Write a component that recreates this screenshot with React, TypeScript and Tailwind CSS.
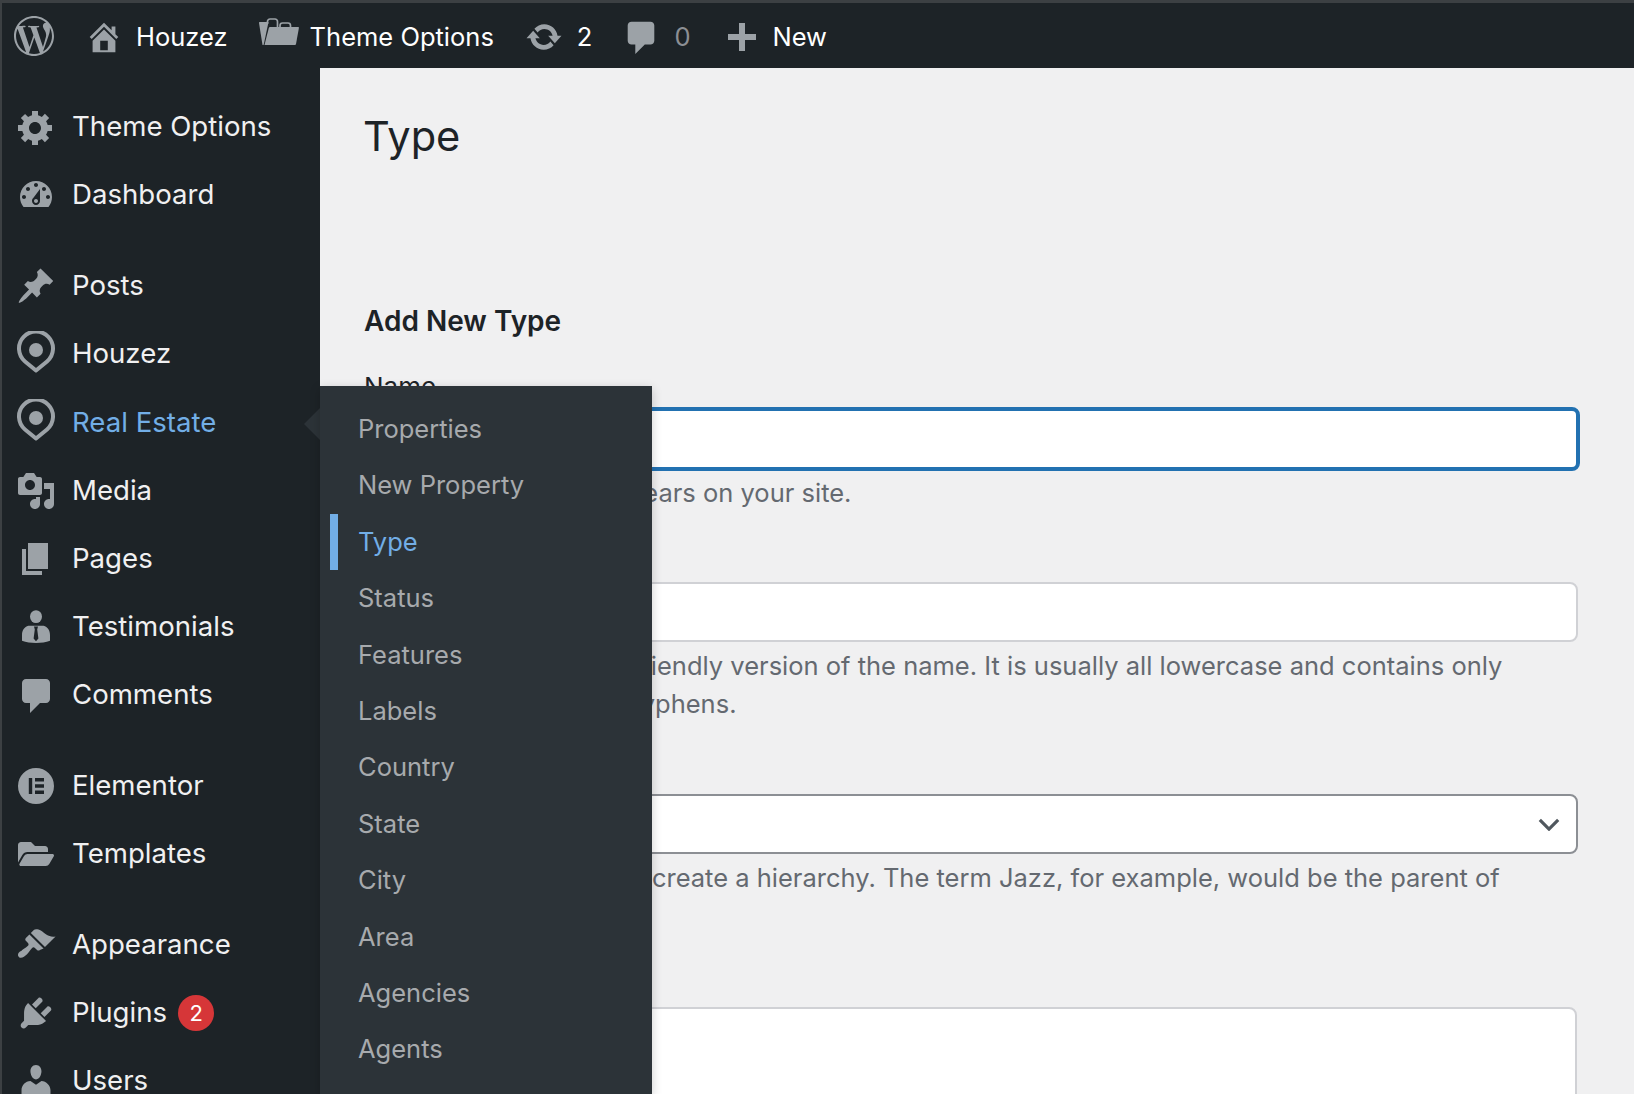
import { FaFolderOpen } from "react-icons/fa";
import { SiWordpress } from "react-icons/si";

const DASH: Record<string, string> = {
  home: "M16 8.5l1.53 1.53-1.06 1.06L10 4.62l-6.47 6.47-1.06-1.06L10 2.5l4 4v-2h2v4zm-6-2.46l6 5.99V18H4v-5.97zM12 17v-5H8v5h4z",
  update:
    "M10.2 3.28c3.53 0 6.43 2.61 6.92 6h2.08l-3.5 4-3.5-4h2.32c-.45-1.97-2.21-3.45-4.32-3.45-1.45 0-2.73.71-3.54 1.78L4.95 5.66C6.23 4.2 8.11 3.28 10.2 3.28zm-.4 13.44c-3.52 0-6.43-2.61-6.92-6H.8l3.5-4c1.17 1.33 2.33 2.67 3.5 4H5.48c.45 1.97 2.21 3.45 4.32 3.45 1.45 0 2.73-.71 3.54-1.78l1.71 1.95c-1.28 1.46-3.15 2.38-5.25 2.38z",
  comment: "M5 2h10c1.1 0 2 .9 2 2v8c0 1.1-.9 2-2 2h-3l-5 5v-5H5c-1.1 0-2-.9-2-2V4c0-1.1.9-2 2-2z",
  plus: "M17 8.5v3h-5.5V17h-3v-5.5H3v-3h5.5V3h3v5.5H17z",
  gear: "M18 12h-2.18c-.17.7-.44 1.35-.81 1.93l1.54 1.54-2.1 2.1-1.54-1.54c-.58.36-1.23.63-1.91.79V19H8v-2.18c-.68-.16-1.33-.43-1.91-.79l-1.54 1.54-2.12-2.12 1.54-1.54c-.36-.58-.63-1.23-.79-1.91H1V9.03h2.17c.16-.7.44-1.35.8-1.94L2.43 5.55l2.1-2.1 1.54 1.54c.58-.37 1.24-.64 1.93-.81V2h3v2.18c.68.16 1.33.43 1.91.79l1.54-1.54 2.12 2.12-1.54 1.54c.36.59.64 1.24.8 1.94H18V12zm-8.5 1.5c1.66 0 3-1.34 3-3s-1.34-3-3-3-3 1.34-3 3 1.34 3 3 3z",
  dashboard:
    "M3.76 16h12.48c1.1-1.37 1.76-3.11 1.76-5 0-4.42-3.58-8-8-8s-8 3.58-8 8c0 1.89.66 3.63 1.76 5zM10 4c.55 0 1 .45 1 1s-.45 1-1 1-1-.45-1-1 .45-1 1-1zM6 6c.55 0 1 .45 1 1s-.45 1-1 1-1-.45-1-1 .45-1 1-1zm8 0c.55 0 1 .45 1 1s-.45 1-1 1-1-.45-1-1 .45-1 1-1zm-5.37 5.55L12 7v6c0 1.1-.9 2-2 2s-2-.9-2-2c0-.57.24-1.08.63-1.45zM4 10c.55 0 1 .45 1 1s-.45 1-1 1-1-.45-1-1 .45-1 1-1zm12 0c.55 0 1 .45 1 1s-.45 1-1 1-1-.45-1-1 .45-1 1-1zm-5 3c0-.55-.45-1-1-1s-1 .45-1 1 .45 1 1 1 1-.45 1-1z",
  pin: "M10.44 3.02l1.82-1.82 6.36 6.35-1.83 1.82c-1.05-.68-2.48-.57-3.41.36l-.75.75c-.92.93-1.04 2.35-.35 3.41l-1.83 1.82-2.41-2.41-2.8 2.79c-.42.42-3.38 2.71-3.8 2.29s1.86-3.39 2.28-3.81l2.79-2.79L4.1 9.36l1.83-1.82c1.05.69 2.48.57 3.4-.36l.75-.75c.93-.92 1.05-2.35.36-3.41z",
  media:
    "M13 11V4c0-.55-.45-1-1-1h-1.67L9 1H5L3.67 3H2c-.55 0-1 .45-1 1v7c0 .55.45 1 1 1h10c.55 0 1-.45 1-1zM7 4.5c1.38 0 2.5 1.12 2.5 2.5S8.38 9.5 7 9.5 4.5 8.38 4.5 7 5.62 4.5 7 4.5zM14 6h5v10.5c0 1.38-1.12 2.5-2.5 2.5S14 17.88 14 16.5s1.12-2.5 2.5-2.5c.17 0 .34.02.5.05V9h-3V6zm-4 8.05V13h2v3.5c0 1.38-1.12 2.5-2.5 2.5S7 17.88 7 16.5 8.12 14 9.5 14c.17 0 .34.02.5.05z",
  page: "M6 15V2h10v13H6zm-1 1h8v2H3V5h2v11z",
  appearance:
    "M14.48 11.06L7.41 3.99l1.5-1.5c.5-.56 2.3-.47 3.51.32 1.21.8 1.43 1.28 2.91 2.1 1.18.64 2.45 1.26 4.45.85zm-.71.71L6.7 4.7 4.93 6.47c-.39.39-.39 1.02 0 1.41l1.06 1.06c.39.39.39 1.03 0 1.42-.6.6-1.43 1.11-2.21 1.69-.35.26-.7.53-1.01.84C1.43 13.23.4 14.96 1.43 15.99s2.76-.002 4.08-1.32c.31-.31.58-.66.85-1.02.57-.78 1.08-1.61 1.69-2.21.39-.39 1.02-.39 1.41 0l1.06 1.06c.39.39 1.02.39 1.41 0z",
  plugin:
    "M13.11 4.36L9.87 7.6 8 5.73l3.24-3.24c.35-.34 1.05-.2 1.56.32.52.51.66 1.21.31 1.55zm-8 1.77l.91-1.12 9.01 9.01-1.19.84c-.71.71-2.63 1.16-3.82 1.16H6.14L4.9 17.26c-.59.59-1.54.59-2.12 0-.59-.58-.59-1.53 0-2.12l1.24-1.24v-3.88c0-1.13.4-3.19 1.09-3.89zm7.26 3.97l3.24-3.24c.34-.35 1.04-.21 1.55.31.52.51.66 1.21.31 1.55l-3.24 3.25z",
  users:
    "M10 9.25c-2.27 0-2.73-3.44-2.73-3.44C7 4.02 7.82 2 9.97 2c2.16 0 2.98 2.02 2.71 3.81 0 0-.41 3.44-2.68 3.44zm0 2.57L12.72 10c2.39 0 4.52 2.33 4.52 4.53v2.49s-3.65 1.13-7.24 1.13c-3.65 0-7.24-1.13-7.24-1.13v-2.49c0-2.25 1.94-4.48 4.47-4.48z",
};

function Dash({ name, className }: { name: string; className?: string }) {
  return (
    <svg viewBox="0 0 20 20" fill="currentColor" className={className}>
      <path d={DASH[name]} />
    </svg>
  );
}

function LocationIcon() {
  return (
    <svg viewBox="0 0 38 42" fill="none" className="w-[38px] h-[42px] mx-[1px] -mt-[4px] shrink-0">
      <path d="M19 39.500 8 30.500A17 17 0 1 1 30 30.500L19 39.500Z" stroke="currentColor" strokeWidth="4" strokeLinejoin="round" />
      <circle cx="19" cy="19" r="7" fill="currentColor" />
    </svg>
  );
}

function BusinessmanIcon({ className }: { className?: string }) {
  return (
    <svg viewBox="0 0 20 20" fill="currentColor" className={className}>
      <ellipse cx="10" cy="4.800" rx="3" ry="3.200" />
      <path fillRule="evenodd" d="M6.200 9.400h7.600c2 .5 3.200 2.300 3.200 4.600v2.900c-2 .7-4.500 1.100-7 1.100s-5-.4-7-1.100V14c0-2.300 1.200-4.100 3.200-4.600zM9 9.800l.4 1.500-.6 4.400 1.200 1.400 1.200-1.400-.6-4.400.4-1.500H9z" />
    </svg>
  );
}

function ElementorIcon({ className }: { className?: string }) {
  return (
    <svg viewBox="0 0 20 20" fill="currentColor" className={className}>
      <path fillRule="evenodd" d="M10 1a9 9 0 1 0 0 18 9 9 0 0 0 0-18zM6.400 6h1.700v8H6.400V6zm3.100 0h4.500v1.700H9.500V6zm0 3.150h4.500v1.700H9.500v-1.700zm0 3.150h4.500V14H9.500v-1.700z" />
    </svg>
  );
}

// open folder with two tabs, traced off the admin bar
function FolderTabsIcon({ className }: { className?: string }) {
  return (
    <svg viewBox="0 0 40 30" fill="currentColor" className={className}>
      <path d="M0.500 4H9.500L5.200 24.500 4.600 27H3.500L0 5C0 4.400.1 4 .5 4Z" />
      <path d="M11 9H39C39.700 9 40 9.400 39.900 10L37 26C36.800 26.800 36.300 27 35.600 27H5.500L9.800 10C10 9.300 10.400 9 11 9Z" />
      <path d="M8.500 6V3.500A2.500 2.500 0 0 1 11 1H16A2.500 2.500 0 0 1 18.500 3.500V9" fill="none" stroke="currentColor" strokeWidth="1.700" />
      <path d="M21 9V7.500A2.500 2.500 0 0 1 23.500 5H29A2.500 2.500 0 0 1 31.500 7.500V9" fill="none" stroke="currentColor" strokeWidth="1.700" />
    </svg>
  );
}

const iconClass = "w-10 h-10 shrink-0";

const MENU = [
  [
    { label: "Theme Options", icon: <Dash name="gear" className={iconClass} /> },
    { label: "Dashboard", icon: <Dash name="dashboard" className={iconClass} /> },
  ],
  [
    { label: "Posts", icon: <Dash name="pin" className={iconClass} /> },
    { label: "Houzez", icon: <LocationIcon /> },
    { label: "Real Estate", icon: <LocationIcon />, active: true },
    { label: "Media", icon: <Dash name="media" className={iconClass} /> },
    { label: "Pages", icon: <Dash name="page" className={iconClass} /> },
    { label: "Testimonials", icon: <BusinessmanIcon className={iconClass} /> },
    { label: "Comments", icon: <Dash name="comment" className={iconClass} /> },
  ],
  [
    { label: "Elementor", icon: <ElementorIcon className={iconClass} /> },
    { label: "Templates", icon: <FaFolderOpen className="w-[36px] h-[36px] mx-[2px] shrink-0" /> },
  ],
  [
    { label: "Appearance", icon: <Dash name="appearance" className={iconClass} /> },
    { label: "Plugins", icon: <Dash name="plugin" className={iconClass} />, badge: "2" },
    { label: "Users", icon: <Dash name="users" className={iconClass} /> },
  ],
];

const SUBMENU = ["Properties", "New Property", "Type", "Status", "Features", "Labels", "Country", "State", "City", "Area", "Agencies", "Agents", "Roles"];

function TopBar() {
  return (
    <header className="h-[65px] shrink-0 bg-[#1d2327] flex items-center text-white text-[25.500px] pl-[12px]">
      <SiWordpress className="w-10 h-10 text-[#9ca2a7]" />
      <Dash name="home" className="w-[38px] h-[38px] ml-[30.500px] mt-[2px] text-[#9ca2a7]" />
      <span className="ml-[13.500px] mt-[4px]">Houzez</span>
      <FolderTabsIcon className="w-10 h-[30px] ml-[31px] -mt-[5px] text-[#9ca2a7]" />
      <span className="ml-[11px] mt-[4px]">Theme Options</span>
      <Dash name="update" className="w-[38px] h-[38px] ml-[31.500px] mt-[2px] text-[#9ca2a7]" />
      <span className="ml-[13.500px] mt-[4px]">2</span>
      <Dash name="comment" className="w-[38px] h-[38px] ml-[30px] mt-[2px] text-[#9ca2a7]" />
      <span className="ml-[14px] mt-[4px] text-[#8c8f94]">0</span>
      <Dash name="plus" className="w-10 h-10 ml-[31px] mt-[2px] text-[#9ca2a7]" />
      <span className="ml-[11px] mt-[4px]">New</span>
    </header>
  );
}

function Sidebar() {
  return (
    <aside className="w-[318px] shrink-0 bg-[#1d2327] pt-[25px] flex flex-col gap-[22.500px] text-[27.600px] text-[#f0f0f1] leading-none">
      {MENU.map((group, i) => (
        <div key={i} className="flex flex-col">
          {group.map((item) => (
            <div key={item.label} className="h-[68.200px] shrink-0 flex items-center pl-[14px]">
              <span className="text-[#9ca2a7] flex">{item.icon}</span>
              <span className={`ml-[16px] ${item.active ? "text-[#72aee6]" : ""}`}>{item.label}</span>
              {item.badge && (
                <span className="ml-[11px] w-9 h-9 rounded-full bg-[#d63638] text-white text-[22px] flex items-center justify-center">
                  {item.badge}
                </span>
              )}
            </div>
          ))}
        </div>
      ))}
    </aside>
  );
}

function Field({
  label,
  help,
  helpClass,
  className,
  children,
}: {
  label: string;
  help?: string;
  helpClass?: string;
  className?: string;
  children: React.ReactNode;
}) {
  return (
    <div className={`flex flex-col ${className ?? ""}`}>
      <label className="text-[26px] leading-[38px] text-[#1d2327]">{label}</label>
      <div className="mt-[3px]">{children}</div>
      {help && <p className={`text-[25.500px] leading-[38.500px] text-[#646970] pr-[20px] ${helpClass ?? ""}`}>{help}</p>}
    </div>
  );
}

function Content() {
  return (
    <main className="flex-1 bg-[#f0f0f1] pl-[44px] pr-[56px] pt-[41px] overflow-hidden">
      <h1 className="-ml-[1px] text-[41.600px] leading-[54px] text-[#1d2327]">Type</h1>
      <h2 className="mt-[140px] text-[28px] leading-[36px] font-semibold text-[#1d2327]">Add New Type</h2>
      <div className="mt-[29px] flex flex-col gap-[29px]">
        <Field label="Name" help="The name is how it appears on your site." helpClass="mt-[7px]">
          <div className="h-[64px] -ml-[3px] -mr-[2px] -mt-[2px] -mb-[4px] bg-white border-4 border-[#2271b1] rounded-[8px]" />
        </Field>
        <Field
          label="Slug"
          help={'The "slug" is the URL-friendly version of the name. It is usually all lowercase and contains only letters, numbers, and hyphens.'}
          helpClass="mt-[5px]"
          className="-mt-[1px]"
        >
          <div className="h-[60px] -ml-[1px] bg-white border-2 border-[#d0d1d5] rounded-[8px]" />
        </Field>
        <Field
          label="Parent Type"
          help="Assign a parent term to create a hierarchy. The term Jazz, for example, would be the parent of Bebop and Big Band."
          helpClass="mt-[5px]"
          className="mt-[0.500px]"
        >
          <div className="h-[60px] -ml-[1px] bg-white border-2 border-[#8c8f94] rounded-[8px] flex items-center justify-end pr-[16px]">
            <svg viewBox="0 0 24 14" className="w-[22px] h-[13px]" fill="none" stroke="#50575e" strokeWidth="3.500">
              <path d="M2 2l10 10L22 2" />
            </svg>
          </div>
        </Field>
        <Field label="Description" className="mt-[1px]">
          <div className="h-[200px] -ml-[1px] mr-[1px] bg-white border-2 border-[#d0d1d5] rounded-t-[8px]" />
        </Field>
      </div>
    </main>
  );
}

function Flyout() {
  return (
    <>
      <div className="absolute left-[302px] top-[405px] w-[16px] h-[32px] bg-[#2c3338] [clip-path:polygon(100%_0,100%_100%,0_50%)]" />
      <ul className="absolute left-[318px] top-[383px] bottom-0 w-[332px] bg-[#2c3338] shadow-[0_3px_10px_rgba(0,0,0,0.2)] pt-[15px] text-[25.500px] text-[#a7aaad]">
        {SUBMENU.map((label) => (
          <li
            key={label}
            className={`h-[56.400px] flex items-center pl-[38px] relative ${label === "Type" ? "text-[#72aee6]" : ""}`}
          >
            {label === "Type" && <span className="absolute left-[10px] top-0 bottom-0 w-2 bg-[#72aee6]" />}
            {label}
          </li>
        ))}
      </ul>
    </>
  );
}

export default function App() {
  return (
    <div className="relative w-full h-[1094px] overflow-hidden bg-[#1d2327] flex flex-col border-l-2 border-t-[3px] border-[#3c4043] font-['Inter','Noto_Sans',sans-serif]">
      <TopBar />
      <div className="flex-1 flex min-h-0">
        <Sidebar />
        <Content />
      </div>
      <Flyout />
    </div>
  );
}
